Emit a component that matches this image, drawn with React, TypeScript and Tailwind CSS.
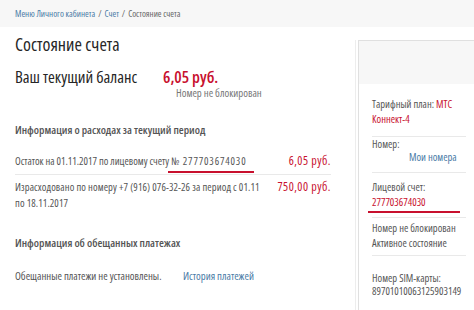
const red = 'text-[#c8102e]';
const blue = 'text-[#4a7ba6]';

function Divider() {
  return <div className="h-px bg-[#e9e9e9]" />;
}

function Sidebar() {
  return (
    <aside className="mt-[13px] flex-1 border-l border-t border-[#e0e0e0] text-[10.5px] leading-[15px] text-[#555]">
      <div className="h-[43px] bg-[#f7f7f7]" />
      <div className="pl-[13px] pr-[8px]">
        <div className="pt-[13px] pb-[9px]">
          Тарифный план: <span className={red}>МТС Коннект-4</span>
        </div>
        <Divider />
        <div className="pb-[7px]">
          <div>Номер:</div>
          <div className={`-mt-[2px] pl-[37px] ${blue}`}>Мои номера</div>
        </div>
        <Divider />
        <div className="pt-[7px]">
          <div>Лицевой счет:</div>
          <div className={red}>277703674030</div>
          <div className="-ml-[4px] mt-[1px] h-[2px] w-[92px] bg-[#c8102e]" />
        </div>
        <div className="mt-[4px]">
          <Divider />
        </div>
        <div className="pt-[3px]">Номер не блокирован</div>
        <div className="pb-[4px]">Активное состояние</div>
        <Divider />
        <div className="pt-[16px] leading-[13px]">
          <div>Номер SIM-карты:</div>
          <div>89701010063125903149</div>
        </div>
      </div>
    </aside>
  );
}

export default function App() {
  return (
    <div
      className="h-[310px] w-[474px] overflow-hidden bg-white font-stretch-condensed"
      style={{ fontFamily: '"Open Sans", "Noto Sans", sans-serif' }}
    >
      <div className="flex h-[27px] items-center bg-[#f7f7f7] px-[15px] text-[9px] text-[#666]">
        <span className={blue}>Меню Личного кабинета</span>
        <span className="mx-[3px]">/</span>
        <span className={blue}>Счет</span>
        <span className="mx-[3px]">/</span>
        <span>Состояние счета</span>
      </div>
      <div className="flex">
        <main className="h-[283px] w-[356px] shrink-0 pl-[15px] pr-[25px] text-[#555]">
          <h1 className="mt-[5px] text-[18px] leading-[24px] text-[#262626]">Состояние счета</h1>
          <div className="mt-[11px] flex items-baseline text-[16.5px] leading-[20px] text-[#262626]">
            <span className="w-[148px]">Ваш текущий баланс</span>
            <span className={`font-semibold ${red}`}>6,05 руб.</span>
          </div>
          <div className="-mt-[1px] pl-[161px] text-[10.75px] leading-[14px] text-[#777]">Номер не блокирован</div>
          <div className="mt-[23px] text-[11.25px] font-semibold leading-[14px] text-[#555]">
            Информация о расходах за текущий период
          </div>
          <div className="mt-[16px] flex items-start justify-between text-[10.5px] leading-[16px]">
            <div className="relative">
              Остаток на 01.11.2017 по лицевому счету{' '}
              <span className="tracking-[0.08em]">№ 277703674030</span>
              <div className="absolute right-[-8px] top-[18px] h-[2px] w-[86px] bg-[#c8102e]" />
            </div>
            <span className={`text-[12px] tracking-[0.04em] ${red}`}>6,05 руб.</span>
          </div>
          <div className="mt-[5px]">
            <Divider />
          </div>
          <div className="mt-[4px] flex items-start justify-between text-[10.5px] leading-[16px]">
            <div className="w-[250px] tracking-[0.01em]">
              Израсходовано по номеру +7 (916) 076-32-26 за период с 01.11 по 18.11.2017
            </div>
            <span className={`text-[12px] tracking-[0.04em] ${red}`}>750,00 руб.</span>
          </div>
          <div className="mt-[25px] text-[11.25px] font-semibold leading-[14px] text-[#555]">
            Информация об обещанных платежах
          </div>
          <div className="mt-[18px] flex text-[10.75px] leading-[16px]">
            <span className="w-[168px]">Обещанные платежи не установлены.</span>
            <span className={blue}>История платежей</span>
          </div>
        </main>
        <div className="mt-[13px] ml-[-1px] w-px bg-[#ededed]" />
        <div className="w-[2px]" />
        <Sidebar />
      </div>
    </div>
  );
}
